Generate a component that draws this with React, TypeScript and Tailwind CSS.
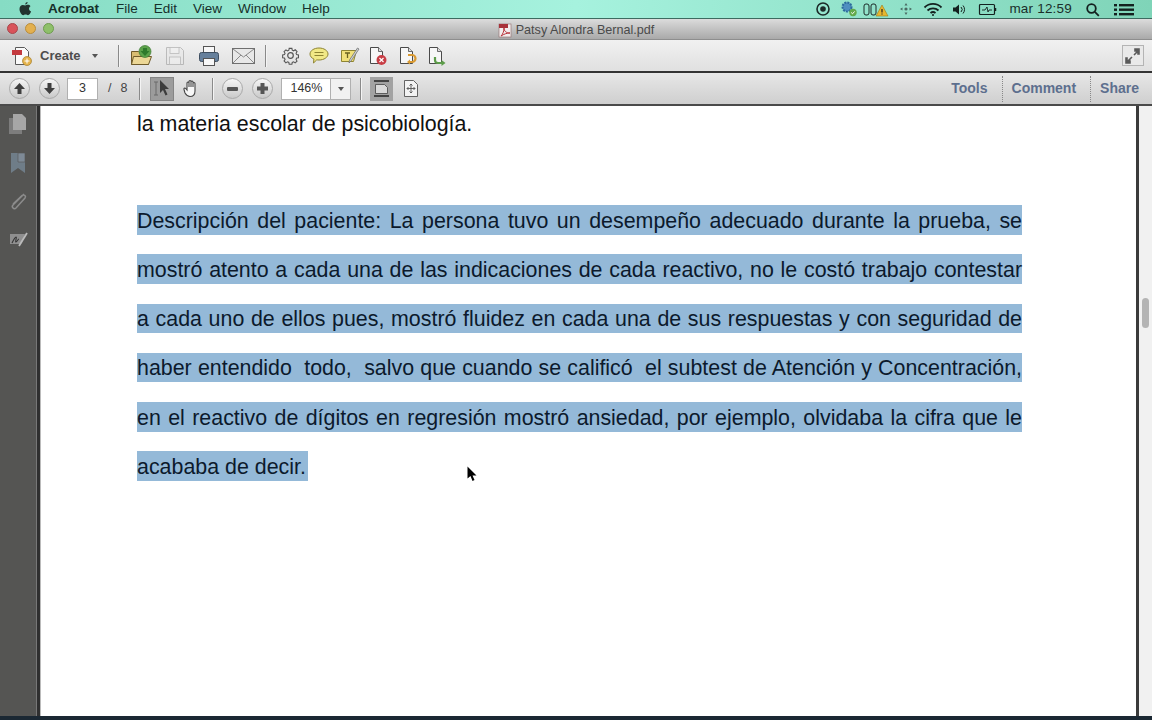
import React from "react";

const sans = "font-['Liberation_Sans',Arial,sans-serif]";

const lines = [
  "Descripción del paciente: La persona tuvo un desempeño adecuado durante la prueba, se",
  "mostró atento a cada una de las indicaciones de cada reactivo, no le costó trabajo contestar",
  "a cada uno de ellos pues, mostró fluidez en cada una de sus respuestas y con seguridad de",
  "haber entendido\u00a0 todo,\u00a0 salvo que cuando se calificó\u00a0 el subtest de Atención y Concentración,",
  "en el reactivo de dígitos en regresión mostró ansiedad, por ejemplo, olvidaba la cifra que le",
];

const Sep = ({ className = "" }: { className?: string }) => (
  <div className={`w-px h-[22px] bg-[#8a8a8a] border-r border-[#f4f4f4] box-content ${className}`} />
);

const RoundBtn = ({ children, className = "" }: { children: React.ReactNode; className?: string }) => (
  <div className={`w-[21px] h-[21px] rounded-full border border-[#a9a9a9] bg-gradient-to-b from-[#f6f6f6] to-[#c9c9c9] flex items-center justify-center shrink-0 ${className}`}>
    {children}
  </div>
);

const DocBase = ({ children }: { children: React.ReactNode }) => (
  <svg width="20" height="20" viewBox="0 0 20 20" className="shrink-0">
    <path d="M2.5 1.5h8l4 4v12h-12z" fill="#f7f7f7" stroke="#4a4a4a" strokeWidth="1" />
    <path d="M10.5 1.5v4h4" fill="#ddd" stroke="#4a4a4a" strokeWidth="0.8" />
    {children}
  </svg>
);

const MenuBar = () => (
  <div className={`h-[19px] shrink-0 flex items-center bg-gradient-to-r from-[#86dcc4] via-[#a6f2de] to-[#7fd4b8] border-b border-[#3d6b60] text-[13.5px] text-[#16302b] ${sans}`}>
    <svg width="14" height="16" viewBox="0 0 14 16" className="ml-[18px] shrink-0" fill="#22332f">
      <path d="M9.6 1c.1 1.3-1 2.6-2.4 2.6C7.1 2.3 8.3 1.1 9.6 1zM7.2 4.4c.7 0 1.5-.6 2.7-.6 1 0 2 .5 2.6 1.4-2.2 1.3-1.8 4.4.6 5.3-.6 1.5-1.8 3.7-3.1 3.7-.9 0-1.3-.6-2.4-.6-1.2 0-1.6.6-2.4.6C3.7 14.2 1.5 11 1.5 8c0-2.6 1.7-4.1 3.3-4.1 1 0 1.8.5 2.4.5z" />
    </svg>
    <span className="ml-[16px] pt-[1px] font-bold">Acrobat</span>
    <span className="ml-[17px] pt-[1px]">File</span>
    <span className="ml-[16px] pt-[1px]">Edit</span>
    <span className="ml-[16px] pt-[1px]">View</span>
    <span className="ml-[16px] pt-[1px]">Window</span>
    <span className="ml-[16px] pt-[1px]">Help</span>
    <div className="ml-auto flex items-center">
      <svg width="16" height="16" viewBox="0 0 16 16" className="shrink-0">
        <circle cx="8" cy="8" r="6" fill="none" stroke="#1c2a28" strokeWidth="1.6" />
        <circle cx="8" cy="8" r="2.8" fill="#1c2a28" />
      </svg>
      <svg width="18" height="16" viewBox="0 0 18 16" className="ml-[9px] shrink-0">
        <circle cx="7" cy="6" r="4.5" fill="#4f8fc0" stroke="#2c6a9c" strokeDasharray="2 1" strokeWidth="2" />
        <circle cx="13" cy="11.5" r="3.7" fill="#62a94a" />
        <path d="M11.2 11.5l1.3 1.3 2.2-2.4" stroke="#fff" strokeWidth="1" fill="none" />
      </svg>
      <svg width="26" height="16" viewBox="0 0 26 16" className="ml-[5px] shrink-0">
        <rect x="1" y="3" width="5" height="11" rx="2" fill="none" stroke="#1c2a28" />
        <rect x="8" y="3" width="5" height="11" rx="2" fill="none" stroke="#1c2a28" />
        <path d="M19 4l6 11H13z" fill="#e6b62e" stroke="#9b7a17" strokeWidth="0.6" />
        <path d="M19 8v3.5M19 12.5v1" stroke="#222" strokeWidth="1.2" />
      </svg>
      <svg width="14" height="14" viewBox="0 0 14 14" className="ml-[10px] shrink-0" fill="#4a6a62">
        <circle cx="7" cy="7" r="1.6" />
        <path d="M7 1l1.5 2.5h-3zM7 13l-1.5-2.5h3zM1 7l2.5-1.5v3zM13 7l-2.5 1.5v-3z" />
      </svg>
      <svg width="20" height="15" viewBox="0 0 20 15" className="ml-[10px] shrink-0" fill="none" stroke="#14211f" strokeWidth="1.8">
        <path d="M1.5 5.5a12 12 0 0 1 17 0M4.5 8.5a8 8 0 0 1 11 0M7.5 11a4 4 0 0 1 5 0" />
        <circle cx="10" cy="13" r="1" fill="#14211f" stroke="none" />
      </svg>
      <svg width="14" height="13" viewBox="0 0 14 13" className="ml-[9px] shrink-0">
        <path d="M1 4.5h2.5L7 1.5v10L3.5 8.5H1z" fill="#14211f" />
        <path d="M9 4a3.5 3.5 0 0 1 0 5M11 2.5a6 6 0 0 1 0 8" fill="none" stroke="#14211f" />
      </svg>
      <svg width="20" height="13" viewBox="0 0 20 13" className="ml-[12px] shrink-0" fill="none" stroke="#14211f">
        <rect x="1.5" y="1.5" width="15" height="10" rx="1" strokeWidth="1.2" />
        <path d="M17.5 5v3" strokeWidth="1.5" />
        <path d="M4 7h3l2-3 1 5 1-2h3" strokeWidth="0.9" />
      </svg>
      <span className="ml-[11px] pt-[1px] text-[#1b2e2a] tracking-[0.2px]">mar 12:59</span>
      <svg width="15" height="15" viewBox="0 0 15 15" className="ml-[13px] shrink-0" fill="none" stroke="#14211f" strokeWidth="1.8">
        <circle cx="6.5" cy="6.5" r="4.3" />
        <path d="M9.8 9.8l4 4" />
      </svg>
      <svg width="20" height="13" viewBox="0 0 20 13" className="ml-[14px] mr-[18px] shrink-0" fill="#14211f">
        <rect x="0" y="1" width="3" height="2.4" />
        <rect x="5" y="1" width="15" height="2.4" />
        <rect x="0" y="5.5" width="3" height="2.4" />
        <rect x="5" y="5.5" width="15" height="2.4" />
        <rect x="0" y="10" width="3" height="2.4" />
        <rect x="5" y="10" width="15" height="2.4" />
      </svg>
    </div>
  </div>
);

const TitleBar = () => (
  <div className={`relative h-[21px] shrink-0 flex items-center justify-center pt-[3px] bg-gradient-to-b from-[#dcdcdc] to-[#a9a9a9] border-b border-[#8e8e8e] ${sans}`}>
    <div className="absolute left-[7px] top-[4px] flex gap-[7px]">
      <div className="w-[11px] h-[11px] rounded-full bg-[#d9535a] border border-[#a8474c]" />
      <div className="w-[11px] h-[11px] rounded-full bg-[#e3b04f] border border-[#b98d3c]" />
      <div className="w-[11px] h-[11px] rounded-full bg-[#8fc06a] border border-[#6f9c50]" />
    </div>
    <div className="flex items-center gap-[4px] text-[12.6px] text-[#4a4a4a]">
      <svg width="14" height="15" viewBox="0 0 14 15" className="shrink-0">
        <rect x="1" y="1" width="12" height="13" fill="#f2eeee" stroke="#9a7a7a" strokeWidth="0.7" />
        <rect x="1" y="1" width="9" height="4" fill="#a8323a" />
        <path d="M3 13c2-2 3-5 3-8 0 3 2 5 6 5-3 0-6 1-9 3z" fill="none" stroke="#b8323a" strokeWidth="1" />
      </svg>
      <span>Patsy Alondra Bernal.pdf</span>
    </div>
  </div>
);

const ToolbarOne = () => (
  <div className={`h-[33px] shrink-0 flex items-center bg-gradient-to-b from-[#f1f1f1] to-[#e0e0e0] border-b-2 border-[#333] ${sans}`}>
    <svg width="22" height="22" viewBox="0 0 22 22" className="ml-[11px] shrink-0">
      <path d="M4.5 2.5h9l4 4v13h-13z" fill="#fafafa" stroke="#5a5a5a" />
      <rect x="1" y="5" width="10" height="5" fill="#c43a3f" />
      <circle cx="16" cy="16" r="4.5" fill="#e4b24a" stroke="#a57e2b" strokeWidth="0.7" />
      <path d="M16 13.5v5M13.5 16h5" stroke="#fff" strokeWidth="1" />
    </svg>
    <span className="ml-[7px] text-[13px] font-bold text-[#4d4d4d]">Create</span>
    <div className="ml-[12px] w-0 h-0 border-x-[3.5px] border-x-transparent border-t-[4px] border-t-[#555]" />
    <Sep className="ml-[20px]" />
    <svg width="24" height="22" viewBox="0 0 24 22" className="ml-[10px] shrink-0">
      <path d="M1.5 6.5h7l2 2h8v11h-17z" fill="#d9bd72" stroke="#6e5a2a" />
      <path d="M3.5 11.5h18l-3 8h-17z" fill="#ecd796" stroke="#6e5a2a" />
      <circle cx="15" cy="6.5" r="6" fill="#5da24b" stroke="#3d7a32" strokeWidth="0.7" />
      <path d="M13 3h4v3h2.5L15 11 10.5 6H13z" fill="#2f7a2c" />
    </svg>
    <svg width="20" height="20" viewBox="0 0 20 20" className="ml-[11px] shrink-0 opacity-40">
      <path d="M1.5 1.5h14l3 3v14h-17z" fill="#e8e8e8" stroke="#777" />
      <rect x="5" y="1.5" width="9" height="6" fill="#f5f5f5" stroke="#777" strokeWidth="0.8" />
      <rect x="4.5" y="11" width="11" height="7.5" fill="#f5f5f5" stroke="#777" strokeWidth="0.8" />
    </svg>
    <svg width="22" height="22" viewBox="0 0 22 22" className="ml-[13px] shrink-0">
      <rect x="5.5" y="1.5" width="11" height="7" fill="#f8f8f8" stroke="#555" />
      <rect x="1.5" y="7.5" width="19" height="9" rx="2" fill="#66809c" stroke="#3e4e60" />
      <rect x="5.5" y="13.5" width="11" height="7" fill="#f8f8f8" stroke="#555" />
    </svg>
    <svg width="23" height="16" viewBox="0 0 23 16" className="ml-[12px] shrink-0">
      <rect x="0.5" y="0.5" width="22" height="15" fill="#e8e8e8" stroke="#6f6f6f" />
      <path d="M1 1l10.5 8L22 1M1 15l8-8M22 15l-8-8" fill="none" stroke="#8a8a8a" />
    </svg>
    <Sep className="ml-[10px]" />
    <svg width="18" height="18" viewBox="0 0 18 18" className="ml-[15px] shrink-0" fill="none" stroke="#555" strokeWidth="1.2">
      <path d="M7.5 1.5h3l.4 2 1.5.7 1.8-1.1 2 2.1-1.1 1.7.7 1.6 2 .4v3l-2 .4-.7 1.5 1.1 1.8-2.1 2-1.7-1.1-1.5.7-.4 2h-3l-.4-2-1.5-.7-1.8 1.1-2-2.1 1.1-1.7-.7-1.5-2-.4v-3l2-.4.7-1.6-1.1-1.7 2.1-2 1.7 1.1 1.5-.7z" transform="scale(0.9) translate(0.5 0)" />
      <circle cx="8.5" cy="8.5" r="2.8" />
    </svg>
    <svg width="20" height="17" viewBox="0 0 20 17" className="ml-[9px] shrink-0">
      <path d="M10 1c5 0 9 2.7 9 6s-4 6-9 6c-.8 0-1.500 0-2.200-.2L4.500 16l.4-4C2.500 11 1 9.200 1 7c0-3.300 4-6 9-6z" fill="#f1e886" stroke="#8e8432" />
      <path d="M5.5 5.5h9M5.5 8.5h9" stroke="#8e8432" />
    </svg>
    <svg width="20" height="18" viewBox="0 0 20 18" className="ml-[11px] shrink-0">
      <path d="M1.5 3.5h15l-3 11h-12z" fill="#f0e07a" stroke="#8e8432" />
      <path d="M5 6h5M7.5 6v5" stroke="#6a6220" strokeWidth="1.3" />
      <path d="M19 2l-8 12-2 2 .5-3 8-12z" fill="#cfd3d6" stroke="#666" strokeWidth="0.7" />
    </svg>
    <div className="ml-[8px]">
      <DocBase>
        <circle cx="13.5" cy="14" r="5" fill="#c83d45" />
        <path d="M11.5 12l4 4M15.5 12l-4 4" stroke="#fff" strokeWidth="1.2" />
      </DocBase>
    </div>
    <div className="ml-[10px]">
      <DocBase>
        <path d="M10 9h4a3 3 0 0 1 0 7h-3" fill="none" stroke="#d99a32" strokeWidth="2.2" />
        <path d="M12 13.5L9 16l3 2.5z" fill="#d99a32" />
      </DocBase>
    </div>
    <div className="ml-[9px]">
      <DocBase>
        <path d="M8 11v3a3 3 0 0 0 3 3h4" fill="none" stroke="#5d9c4a" strokeWidth="2.2" />
        <path d="M14.5 14l4 3-4 3z" fill="#5d9c4a" />
      </DocBase>
    </div>
    <div className="ml-auto mr-[8px] w-[22px] h-[21px] border border-[#b4b4b4] bg-[#e9e9e9] flex items-center justify-center">
      <svg width="16" height="16" viewBox="0 0 16 16" fill="#5a5a5a">
        <path d="M9 7l5-5M14 1v5h-1V3H10V1z" stroke="#5a5a5a" strokeWidth="1.6" />
        <path d="M7 9l-5 5M1 15v-5h1v3h3v2z" stroke="#5a5a5a" strokeWidth="1.6" />
      </svg>
    </div>
  </div>
);

const ToolbarTwo = () => (
  <div className={`h-[33px] shrink-0 flex items-center bg-gradient-to-b from-[#e7e7e7] to-[#cfcfcf] border-b-2 border-[#4a4a4a] ${sans}`}>
    <RoundBtn className="ml-[9px]">
      <svg width="13" height="13" viewBox="0 0 13 13" fill="#3f3f3f"><path d="M6.5 1L12 7H8.500v5h-4V7H1z" /></svg>
    </RoundBtn>
    <RoundBtn className="ml-[9px]">
      <svg width="13" height="13" viewBox="0 0 13 13" fill="#3f3f3f"><path d="M6.5 12L1 6h3.500V1h4v5H12z" /></svg>
    </RoundBtn>
    <div className="ml-[7px] w-[31px] h-[22px] bg-white border border-[#b0b0b0] flex items-center justify-center text-[12.5px] text-[#333]">3</div>
    <span className="ml-[10px] text-[12.5px] text-[#444]">/</span>
    <span className="ml-[9px] text-[12.5px] text-[#444]">8</span>
    <Sep className="ml-[12px]" />
    <div className="ml-[9px] w-[24px] h-[24px] bg-[#9c9c9c] border border-[#858585] flex items-center justify-center">
      <svg width="20" height="19" viewBox="0 0 20 19">
        <path d="M2 3h4M2 16h4M4 3v13" stroke="#6a6a6a" fill="none" />
        <path d="M8 1l9 9h-4l2.5 5.5-2 1L11 11l-3 3z" fill="#3c3c3c" />
      </svg>
    </div>
    <svg width="18" height="19" viewBox="0 0 18 19" className="ml-[8px] shrink-0" fill="#f7f7f7" stroke="#444" strokeWidth="1.1">
      <path d="M5 11V4a1 1 0 0 1 2 0v4-5.5a1 1 0 0 1 2 0V8 3a1 1 0 0 1 2 0v5-3.500a1 1 0 0 1 2 0V12c0 3.500-2 5.500-5 5.500-2.500 0-3.500-1-5-3.500L2 10.500c-.6-1 .8-2 1.700-1z" />
    </svg>
    <Sep className="ml-[12px]" />
    <RoundBtn className="ml-[8px]">
      <div className="w-[11px] h-[4px] bg-[#555] rounded-[1px]" />
    </RoundBtn>
    <RoundBtn className="ml-[9px]">
      <svg width="13" height="13" viewBox="0 0 13 13" fill="#555"><path d="M4.5 1h4v3.500H12v4H8.500V12h-4V8.500H1v-4h3.500z" /></svg>
    </RoundBtn>
    <div className="ml-[8px] w-[50px] h-[22px] bg-white border border-[#b0b0b0] flex items-center justify-center text-[12.5px] text-[#333]">146%</div>
    <div className="w-[20px] h-[22px] bg-[#f1f1f1] border border-l-0 border-[#b0b0b0] flex items-center justify-center">
      <div className="w-0 h-0 border-x-[3.5px] border-x-transparent border-t-[4px] border-t-[#555]" />
    </div>
    <Sep className="ml-[9px]" />
    <div className="ml-[8px] w-[23px] h-[24px] bg-[#a2a2a2] flex items-center justify-center">
      <svg width="17" height="19" viewBox="0 0 17 19" fill="none" stroke="#444">
        <path d="M1 2h15M1 17h15" strokeWidth="2" />
        <path d="M2.5 5.5h9l3 3v6h-12z" fill="#d9d9d9" strokeWidth="0.8" />
      </svg>
    </div>
    <svg width="16" height="19" viewBox="0 0 16 19" className="ml-[10px] shrink-0" fill="#f3f3f3" stroke="#555" strokeWidth="0.9">
      <path d="M1.5 1.5h9l4 4v12h-13z" />
      <path d="M8 5v9M4 9.5h8M8 5L6.5 6.5M8 5l1.500 1.500M8 14l-1.500-1.500M8 14l1.500-1.500M4 9.500l1.500-1.500M4 9.500l1.500 1.500M12 9.500L10.500 8M12 9.500l-1.500 1.500" fill="none" />
    </svg>
    <div className="ml-auto flex items-center h-full text-[14px] font-bold text-[#5d6f8e]">
      <span>Tools</span>
      <div className="ml-[14px] h-[26px] border-l border-dotted border-[#888]" />
      <span className="ml-[9px]">Comment</span>
      <div className="ml-[14px] h-[26px] border-l border-dotted border-[#888]" />
      <span className="ml-[9px] mr-[13px]">Share</span>
    </div>
  </div>
);

const SideRail = () => (
  <div className="w-[41px] shrink-0 flex border-r-[1px] border-[#bbb]">
    <div className="w-[37px] bg-[#555553] border-r border-[#777] flex flex-col items-center pt-[7px]">
      <svg width="20" height="22" viewBox="0 0 20 22" className="shrink-0">
        <rect x="1" y="5" width="13" height="16" fill="#7d7d7d" />
        <path d="M5 1h9l4 4v12H5z" fill="#a6a6a6" />
      </svg>
      <svg width="14" height="20" viewBox="0 0 14 20" className="mt-[18px] shrink-0">
        <path d="M0 0h14v20l-7-5-7 5z" fill="#6f7d88" />
        <path d="M7 0h7v9H7z" fill="#7e8a96" stroke="#555" strokeWidth="0.6" />
      </svg>
      <svg width="20" height="22" viewBox="0 0 20 22" className="mt-[18px] shrink-0" fill="none" stroke="#8c8c8c" strokeWidth="1.5">
        <path d="M16 3L5 14c-2 2 1 5 3 3l9-10c1.500-2-1-4-3-2.500L5 13" />
      </svg>
      <svg width="20" height="16" viewBox="0 0 20 16" className="mt-[19px] shrink-0">
        <path d="M2 2h15l-4 10H2z" fill="#8f8f8f" />
        <path d="M4 11c1.500-3 3-6 4-6s-1 5 0 5 2-3 3-3" fill="none" stroke="#333" strokeWidth="1.1" />
        <path d="M19 1l-8 13" stroke="#bbb" strokeWidth="1.8" />
      </svg>
    </div>
    <div className="w-[3px] bg-[#2f2f2f]" />
  </div>
);

const Page = () => (
  <div className={`relative flex-1 min-w-0 bg-white pl-[96px] pr-[114px] pt-[4px] text-[21.4px] leading-[29.5px] text-[#111] ${sans}`}>
    <p className="whitespace-nowrap">la materia escolar de psicobiología.</p>
    <div className="mt-[65.5px] flex flex-col gap-[19.8px] text-[#0c1a2c]">
      {lines.map((t) => (
        <p key={t} className="h-[29.5px] pt-[1.5px] bg-[#94b9d8] [text-align:justify] [text-align-last:justify]">
          {t}
        </p>
      ))}
      <p className="h-[29.5px] pt-[1.5px] pr-[2px] w-fit bg-[#94b9d8]">acababa de decir.</p>
    </div>
    <svg width="10" height="16" viewBox="0 0 10 16" className="absolute left-[426px] top-[360px]" fill="#000">
      <path d="M0.5 0.5v12l3-2.5 2 5 2-1-2-4.5h4z" />
    </svg>
  </div>
);

const ScrollBar = () => (
  <div className="w-[16px] shrink-0 flex">
    <div className="w-[3px] bg-[#3a3a3a]" />
    <div className="flex-1 bg-[#f1f1f1] flex flex-col items-center">
      <div className="mt-[192px] w-[7px] h-[30px] rounded-full bg-[#b4b4b4]" />
    </div>
  </div>
);

export default function App() {
  return (
    <div className="w-[1152px] h-[720px] overflow-hidden flex flex-col bg-white">
      <MenuBar />
      <TitleBar />
      <ToolbarOne />
      <ToolbarTwo />
      <div className="flex-1 min-h-0 flex">
        <SideRail />
        <Page />
        <ScrollBar />
      </div>
      <div className="h-[4px] shrink-0 bg-[#1b2833]" />
    </div>
  );
}
